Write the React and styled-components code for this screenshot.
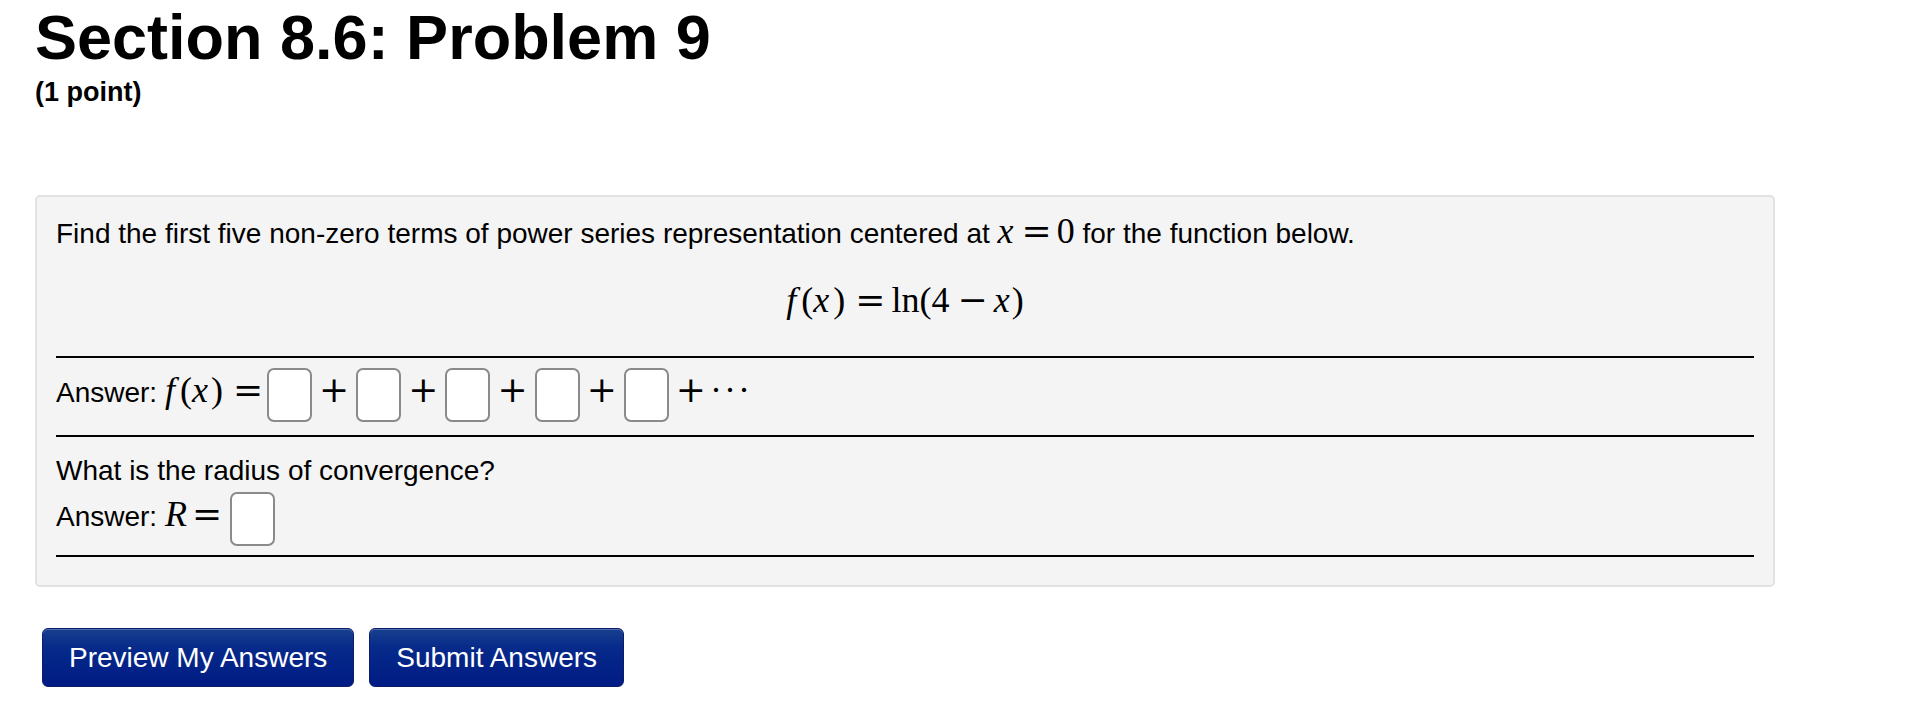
import React from "react"
import styled, { createGlobalStyle } from "styled-components"

const GlobalStyle = createGlobalStyle`
  body {
    margin: 0;
    background: #fff;
    color: #000;
    font-family: "Liberation Sans", Arial, sans-serif;
  }
`

const Page = styled.div`
  padding: 2px 0 0 35px;
`

const Title = styled.h1`
  margin: 0;
  font-size: 63px;
  line-height: 70px;
  font-weight: bold;
`

const Points = styled.div`
  margin-top: 4px;
  font-size: 27px;
  line-height: 32px;
  font-weight: bold;
`

const ProblemBox = styled.div`
  box-sizing: border-box;
  width: 1740px;
  margin-top: 87px;
  padding: 20px 19px 28px;
  background: #f4f4f4;
  border: 2px solid #e2e2e2;
  border-radius: 5px;
`

const Para = styled.p`
  margin: ${({ $top }) => $top || 0}px 0 0;
  font-size: 28px;
  line-height: 34px;
`

/* inline math: zero line-height so it never stretches the text line */
const Math = styled.span`
  font-family: "Liberation Serif", "Times New Roman", serif;
  font-size: 36px;
  line-height: 0;
  white-space: nowrap;
`

const Display = styled.div`
  margin-top: 29px;
  text-align: center;
  font-family: "Liberation Serif", "Times New Roman", serif;
  font-size: 36px;
  line-height: 40px;
  white-space: nowrap;
`

const Var = styled.i`
  font-style: italic;
  margin-right: ${({ $pad }) => $pad || 0}px;
`

const Op = styled.span`
  font-family: "DejaVu Serif", serif;
  margin: 0 ${({ $r }) => $r ?? 4}px 0 ${({ $l }) => $l ?? 4}px;
`

const Dots = styled.span`
  margin-left: -3px;
  letter-spacing: 2px;
`

const Rule = styled.div`
  height: 2px;
  background: #000;
  margin-top: ${({ $top }) => $top || 0}px;
`

const AnswerRow = styled.div`
  padding: ${({ $pad }) => $pad};
  font-size: 28px;
  line-height: 34px;
  white-space: nowrap;
`

const Blank = styled.input`
  box-sizing: border-box;
  width: 45px;
  height: 54px;
  margin: 0;
  padding: 0;
  vertical-align: middle;
  background: #fff;
  border: 2px solid #8a8a8a;
  border-radius: 7px;
`

const ButtonRow = styled.div`
  display: flex;
  gap: 15px;
  margin: 41px 0 0 7px;
`

const Button = styled.button`
  box-sizing: border-box;
  height: 59px;
  padding: 0 26px;
  font-family: "Liberation Sans", Arial, sans-serif;
  font-size: 28px;
  color: #fff;
  background: linear-gradient(to bottom, #173f8e 0%, #06298a 35%, #001b84 100%);
  border: 1px solid #0a1d6a;
  border-radius: 6px;
  box-shadow: inset 0 1px 0 rgba(255, 255, 255, 0.25);
  cursor: pointer;
`

const terms = [0, 1, 2, 3, 4]

export default function App() {
  return (
    <Page>
      <GlobalStyle />
      <Title>Section 8.6: Problem 9</Title>
      <Points>(1 point)</Points>

      <ProblemBox>
        <Para>
          Find the first five non-zero terms of power series representation
          centered at{" "}
          <Math>
            <Var $pad={2}>x</Var>
            <Op $l={6} $r={5}>=</Op>0
          </Math>{" "}
          for the function below.
        </Para>

        <Display>
          <Var $pad={5}>f</Var>(<Var $pad={4}>x</Var>)
          <Op $l={10} $r={6}>=</Op>ln(4
          <Op $l={8} $r={6}>−</Op>
          <Var $pad={2}>x</Var>)
        </Display>

        <Rule $top={36} />

        <AnswerRow $pad="10px 0 13px">
          Answer:{" "}
          <Math>
            <Var $pad={5}>f</Var>(<Var $pad={3}>x</Var>)
            <Op $l={10} $r={4}>=</Op>
          </Math>
          {terms.map(i => (
            <React.Fragment key={i}>
              <Blank readOnly aria-label={`term ${i + 1}`} />
              <Math>
                <Op $l={7} $r={7}>+</Op>
              </Math>
            </React.Fragment>
          ))}
          <Math>
            <Dots>···</Dots>
          </Math>
        </AnswerRow>

        <Rule />

        <Para $top={17}>What is the radius of convergence?</Para>
        <AnswerRow $pad="4px 0 9px">
          Answer:{" "}
          <Math>
            <Var $pad={2}>R</Var>
            <Op $l={3} $r={8}>=</Op>
          </Math>
          <Blank readOnly aria-label="radius" />
        </AnswerRow>

        <Rule />
      </ProblemBox>

      <ButtonRow>
        <Button type="button">Preview My Answers</Button>
        <Button type="button">Submit Answers</Button>
      </ButtonRow>
    </Page>
  )
}
